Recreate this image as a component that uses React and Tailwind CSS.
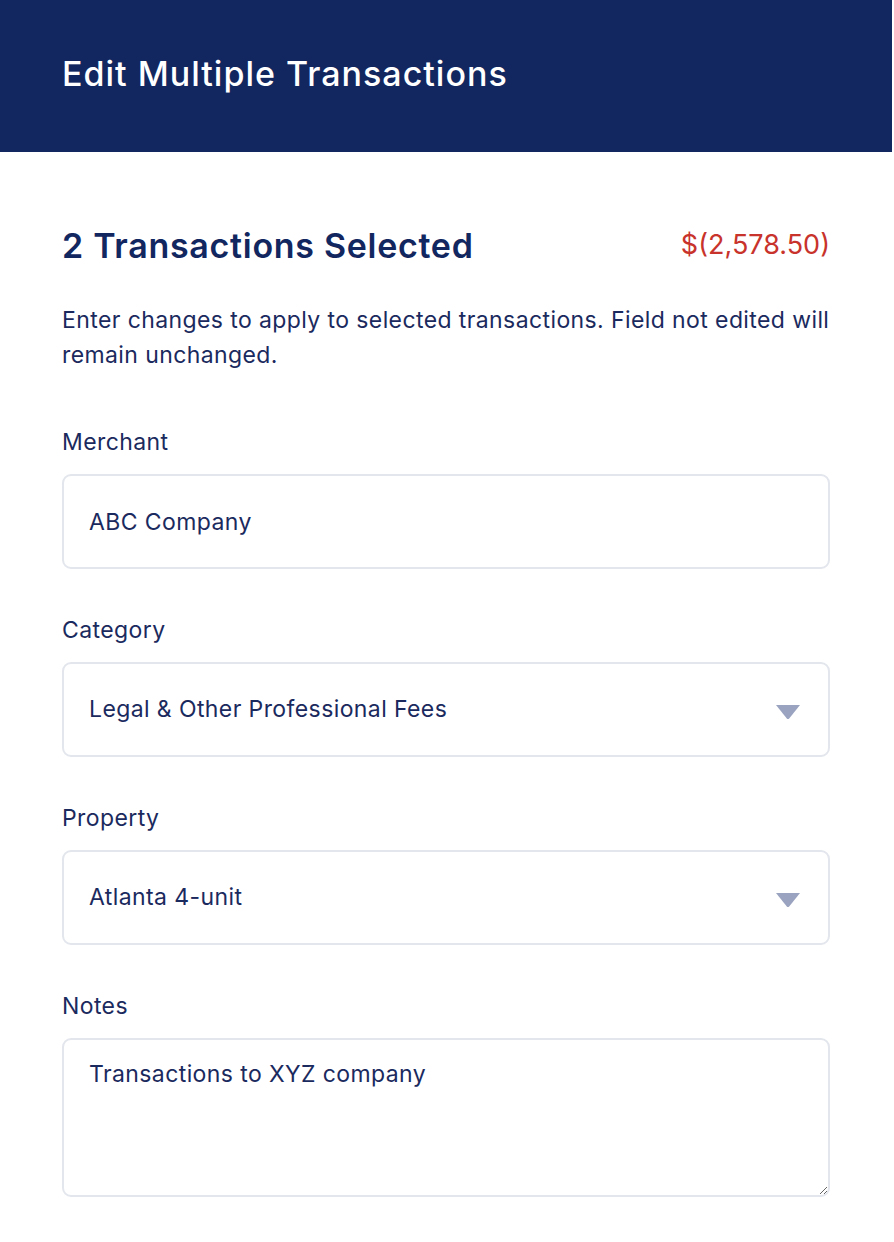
import React from 'react'

const Caret = () => (
  <svg width="26" height="16" viewBox="0 0 26 16" className="shrink-0 mt-[5px]">
    <path d="M1 1 H25 L14.2 14.4 Q13 15.6 11.8 14.4 Z" fill="#9aa3bf" />
  </svg>
)

const Label = ({ children }) => (
  <div className="text-[23px] tracking-[0.4px] leading-[30px] text-[#1b2a5e] mb-[17px]">{children}</div>
)

const SelectBox = ({ value }) => (
  <div className="h-[95px] rounded-[9px] border-2 border-[#e3e6ec] bg-white flex items-center justify-between pl-[25px] pr-[27px]">
    <span className="text-[23px] tracking-[0.4px] text-[#1b2a5e]">{value}</span>
    <Caret />
  </div>
)

export default function App() {
  return (
    <div className="w-[894px] min-h-[1242px] bg-white border-r-2 border-white/50" style={{ fontFamily: 'Inter, "Noto Sans", sans-serif' }}>
      {/* header */}
      <div className="h-[152px] bg-[#12275f] flex items-center px-[62px]">
        <h1 className="text-white text-[34px] font-medium tracking-[1px] mb-[5px]">Edit Multiple Transactions</h1>
      </div>

      <div className="px-[62px] pt-[68px] pb-[40px]">
        <div className="flex items-center justify-between h-[50px]">
          <h2 className="text-[34px] font-semibold text-[#12275f] tracking-[0.7px]">2 Transactions Selected</h2>
          <span className="text-[27px] text-[#c8332b]">$(2,578.50)</span>
        </div>

        <p className="mt-[33px] text-[23px] tracking-[0.4px] leading-[35px] text-[#1b2a5e]">
          Enter changes to apply to selected transactions. Field not edited will remain unchanged.
        </p>

        <div className="mt-[54px]">
          <Label>Merchant</Label>
          <input
            defaultValue="ABC Company"
            className="w-full h-[95px] rounded-[9px] border-2 border-[#e3e6ec] bg-white pl-[25px] text-[23px] tracking-[0.4px] text-[#1b2a5e] outline-none"
          />
        </div>

        <div className="mt-[46px]">
          <Label>Category</Label>
          <SelectBox value="Legal & Other Professional Fees" />
        </div>

        <div className="mt-[46px]">
          <Label>Property</Label>
          <SelectBox value="Atlanta 4-unit" />
        </div>

        <div className="mt-[46px]">
          <Label>Notes</Label>
          <textarea
            defaultValue="Transactions to XYZ company"
            className="block w-full h-[159px] rounded-[9px] border-2 border-[#e3e6ec] bg-white px-[25px] pt-[19px] text-[23px] tracking-[0.4px] leading-[30px] text-[#1b2a5e] outline-none"
          />
        </div>
      </div>
    </div>
  )
}
